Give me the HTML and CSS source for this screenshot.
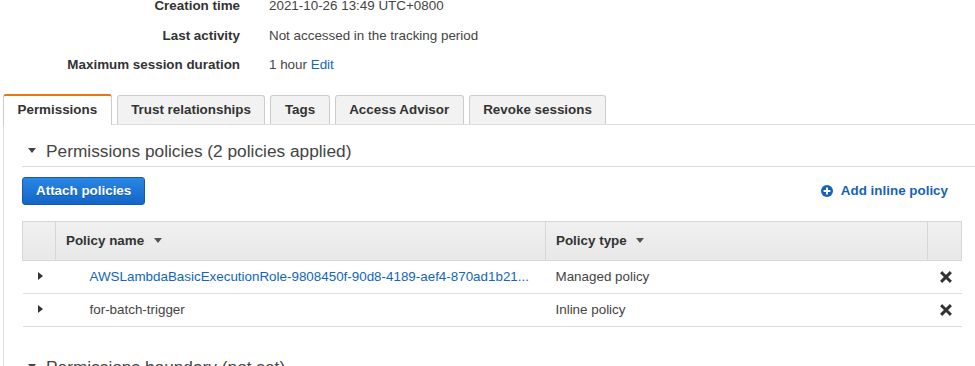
FILE: index.html
```html
<!DOCTYPE html>
<html lang="en">
  <head>
    <meta charset="UTF-8" />
    <meta name="viewport" content="width=device-width, initial-scale=1.0" />
    <title>Role summary</title>
    <link rel="stylesheet" href="styles.css">
  </head>

  <body>
    <div class="page">
      <!-- Role summary -->
      <dl class="summary">
        <dt>Creation time</dt>
        <dd>2021-10-26 13:49 UTC+0800</dd>
        <dt>Last activity</dt>
        <dd>Not accessed in the tracking period</dd>
        <dt>Maximum session duration</dt>
        <dd>1 hour <a href="#">Edit</a></dd>
      </dl>

      <!-- Tabs -->
      <div class="tabs">
        <a class="tab active" href="#">Permissions</a>
        <a class="tab" href="#">Trust relationships</a>
        <a class="tab" href="#">Tags</a>
        <a class="tab" href="#">Access Advisor</a>
        <a class="tab" href="#">Revoke sessions</a>
      </div>

      <div class="panel">
        <section class="section">
          <h3 class="section-title"><span class="caret-down"></span>Permissions policies (2 policies applied)</h3>

          <div class="toolbar">
            <button type="button" class="btn-primary">Attach policies</button>
            <a class="add-inline" href="#">
              <svg width="12" height="12" viewBox="0 0 12 12">
                <circle cx="6" cy="6" r="6" fill="#1563b8" />
                <path d="M6 2.6v6.8M2.6 6h6.8" stroke="#fff" stroke-width="2" />
              </svg>
              Add inline policy
            </a>
          </div>

          <table class="policies">
            <colgroup>
              <col class="col-expand" />
              <col class="col-name" />
              <col />
              <col class="col-remove" />
            </colgroup>
            <thead>
              <tr>
                <th></th>
                <th class="name">Policy name <span class="sort"></span></th>
                <th>Policy type <span class="sort"></span></th>
                <th></th>
              </tr>
            </thead>
            <tbody>
              <tr>
                <td class="expand"><span class="caret-right"></span></td>
                <td class="name"><a href="#">AWSLambdaBasicExecutionRole-9808450f-90d8-4189-aef4-870ad1b21...</a></td>
                <td>Managed policy</td>
                <td class="remove">
                  <svg width="12" height="12" viewBox="0 0 12 12">
                    <path d="M2.2 2.2l7.6 7.6M9.8 2.2l-7.6 7.6" stroke="#333" stroke-width="3" stroke-linecap="square" />
                  </svg>
                </td>
              </tr>
              <tr>
                <td class="expand"><span class="caret-right"></span></td>
                <td class="name">for-batch-trigger</td>
                <td>Inline policy</td>
                <td class="remove">
                  <svg width="12" height="12" viewBox="0 0 12 12">
                    <path d="M2.2 2.2l7.6 7.6M9.8 2.2l-7.6 7.6" stroke="#333" stroke-width="3" stroke-linecap="square" />
                  </svg>
                </td>
              </tr>
            </tbody>
          </table>
        </section>

        <section class="section boundary">
          <h3 class="section-title"><span class="caret-down"></span>Permissions boundary (not set)</h3>
        </section>
      </div>
    </div>
  </body>
</html>
```

FILE: styles.css
```css
body {
  font-family: "Liberation Sans", Arial, sans-serif;
  font-size: 13.4px;
  color: #444;
  margin: 0;
  padding: 0;
  background-color: #fff;
  overflow: hidden;
}

a {
  color: #1166bb;
  text-decoration: none;
}

.page {
  padding-left: 3px;
}

/* Summary */

.summary {
  display: grid;
  grid-template-columns: 237px auto;
  column-gap: 29px;
  margin: -9px 0 0;
  line-height: 29.5px;
}

.summary dt {
  text-align: right;
  font-weight: bold;
  color: #333;
}

.summary dd {
  margin: 0;
}

/* Tabs */

.tabs {
  display: flex;
  align-items: flex-end;
  gap: 5px;
  margin-top: 14px;
  border-bottom: 1px solid #ddd;
}

.tab {
  height: 28px;
  line-height: 28px;
  padding: 0 13.5px;
  border: 1px solid #ccc;
  border-bottom: none;
  border-radius: 3px 3px 0 0;
  background: #f2f2f2;
  color: #333;
  font-weight: bold;
}

.tab.active {
  height: 29px;
  margin-bottom: -1px;
  border-top: 2px solid #e47911;
  background: #fff;
}

/* Panel */

.panel {
  border-left: 1px solid #ddd;
  padding-left: 18px;
}

.section-title {
  margin: 0;
  padding: 16px 0 5px;
  font-size: 17.3px;
  font-weight: normal;
  line-height: 20px;
  color: #444;
  border-bottom: 1px solid #ddd;
}

.caret-down {
  display: inline-block;
  vertical-align: middle;
  margin: -3px 10px 0 6px;
  border-left: 4px solid transparent;
  border-right: 4px solid transparent;
  border-top: 5px solid #444;
}

.toolbar {
  display: flex;
  justify-content: space-between;
  align-items: center;
  margin-top: 10px;
  padding-right: 27px;
}

.btn-primary {
  height: 28px;
  padding: 0 13px;
  font-family: inherit;
  font-size: 13.4px;
  font-weight: bold;
  color: #fff;
  background: linear-gradient(#2a86e4, #1266c8);
  border: 1px solid #1a58a8;
  border-radius: 3px;
  text-shadow: 0 1px 0 rgba(0, 0, 0, 0.25);
  cursor: pointer;
}

.add-inline {
  display: flex;
  align-items: center;
  gap: 8px;
  font-weight: bold;
  color: #1563b8;
}

/* Policies table */

.policies {
  width: calc(100% - 13px);
  margin-top: 16px;
  border-collapse: collapse;
  table-layout: fixed;
}

.col-expand {
  width: 33px;
}

.col-name {
  width: 490px;
}

.col-remove {
  width: 34px;
}

.policies th {
  height: 38px;
  padding: 0 10px;
  text-align: left;
  font-weight: bold;
  color: #333;
  background: linear-gradient(#f0f0f0, #e8e8e8);
  border: 1px solid #d6d6d6;
}

.policies td {
  height: 32px;
  padding: 0 10px;
  border-bottom: 1px solid #ddd;
  white-space: nowrap;
  overflow: hidden;
}

.policies td.name {
  padding-left: 34px;
}

.policies td.expand {
  padding: 0 0 0 3px;
  text-align: center;
}

.policies td.remove {
  padding: 0 0 0 2px;
  text-align: center;
}

.policies td.remove svg {
  display: block;
  margin: 0 auto;
}

.sort {
  display: inline-block;
  vertical-align: middle;
  margin: -2px 0 0 6px;
  border-left: 4px solid transparent;
  border-right: 4px solid transparent;
  border-top: 5px solid #555;
}

.caret-right {
  display: inline-block;
  vertical-align: middle;
  margin-top: -2px;
  border-top: 4.5px solid transparent;
  border-bottom: 4.5px solid transparent;
  border-left: 5px solid #333;
}

.boundary {
  margin-top: 14px;
}
```
